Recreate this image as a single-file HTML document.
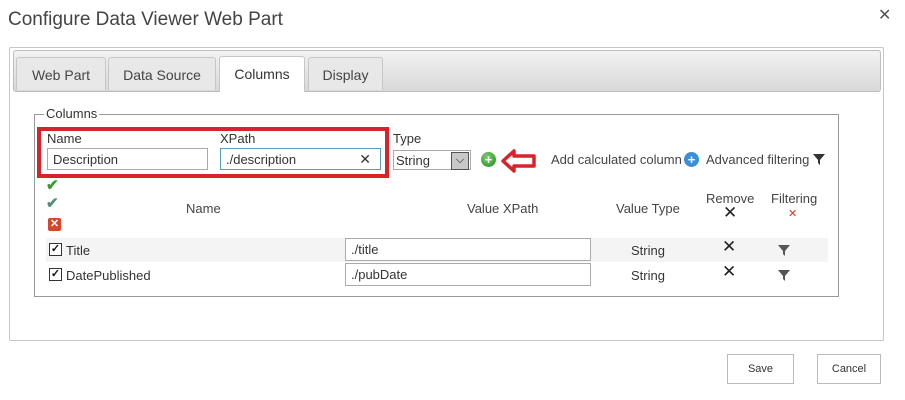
<!DOCTYPE html>
<html><head><style>
body{margin:0;width:905px;height:400px;background:#fff;font-family:"Liberation Sans",sans-serif;color:#444;position:relative;overflow:hidden;font-size:13px}
.a{position:absolute}
.tab{position:absolute;top:57px;height:32px;background:#e8e8e8;border:1px solid #c6c6c6;border-bottom:none;border-radius:3px 3px 0 0;font-size:14px;line-height:34px;text-align:center;color:#444}
.box{position:absolute;border:1px solid #aaa;background:#fff;box-sizing:border-box;font-size:13px;padding:3px 5px;color:#333}
.btn{position:absolute;border:1px solid #bbb;background:#fff;font-size:11px;text-align:center;line-height:28px;color:#333}
</style></head><body>
<div class="a" style="left:8px;top:9px;font-size:19px;color:#444">Configure Data Viewer Web Part</div>
<div class="a" style="left:878px;top:5px;font-size:16px;color:#555">✕</div>
<div class="a" style="left:9px;top:47px;width:873px;height:292px;border:1px solid #c6c6c6;border-radius:2px"></div>
<div class="a" style="left:13px;top:50px;width:866px;height:40px;background:linear-gradient(#f2f2f2,#d8d8d8);border:1px solid #bdbdbd;border-radius:3px"></div>
<div class="tab" style="left:16px;width:88px">Web Part</div>
<div class="tab" style="left:108px;width:106px">Data Source</div>
<div class="tab" style="left:219px;width:84px;background:#fff;height:35px;top:56px;color:#333">Columns</div>
<div class="tab" style="left:308px;width:73px">Display</div>
<div class="a" style="left:34px;top:114px;width:803px;height:181px;border:1px solid #999"></div>
<div class="a" style="left:44px;top:106px;background:#fff;padding:0 2px;color:#333">Columns</div>
<div class="a" style="left:37px;top:127px;width:344px;height:43px;border:4px solid #d9222a"></div>
<div class="a" style="left:47px;top:131px;color:#333">Name</div>
<div class="box" style="left:47px;top:148px;width:161px;height:22px">Description</div>
<div class="a" style="left:220px;top:131px;color:#333">XPath</div>
<div class="box" style="left:220px;top:148px;width:161px;height:22px;border-color:#5a9bc0">./description<span style="position:absolute;right:9px;top:2px;font-size:14px">✕</span></div>
<div class="a" style="left:393px;top:131px;color:#333">Type</div>
<div class="box" style="left:393px;top:150px;width:78px;height:20px;padding:2px 2px">String<span style="position:absolute;right:1px;top:1px;width:16px;height:16px;background:#c8c8c8;border:1px solid #555;font-size:11px;text-align:center;line-height:14px;color:#000">⌵</span></div>
<div class="a" style="left:481px;top:152px;width:15px;height:15px;border-radius:50%;background:radial-gradient(circle at 40% 35%,#7ccf6a,#1d8a22);color:#fff;font-weight:bold;font-size:13px;line-height:15px;text-align:center">+</div>
<svg class="a" style="left:500px;top:148px" width="38" height="26"><path d="M3 13 L14 3 L14 8 L34 8 L34 18 L14 18 L14 23 Z" fill="#fff" stroke="#d9222a" stroke-width="3.5" stroke-linejoin="round"/></svg>
<div class="a" style="left:551px;top:152px;color:#444">Add calculated column</div>
<div class="a" style="left:684px;top:152px;width:15px;height:15px;border-radius:50%;background:#3a8fd6;color:#fff;font-weight:bold;line-height:15px;text-align:center">+</div>
<div class="a" style="left:706px;top:152px;color:#444">Advanced filtering</div>
<svg class="a" style="left:813px;top:154px" width="12" height="11"><path d="M0 0H12L7 6V11L5 9V6Z" fill="#333"/></svg>
<div class="a" style="left:46px;top:176px;color:#3a9a2a;font-size:15px;font-weight:bold">✔</div>
<div class="a" style="left:46px;top:194px;color:#5a8a7a;font-size:15px;font-weight:bold">✔</div>
<div class="a" style="left:48px;top:218px;width:13px;height:13px;background:#d9452a;border-radius:2px;color:#fff;font-size:11px;line-height:13px;text-align:center;font-weight:bold">✕</div>
<div class="a" style="left:186px;top:201px">Name</div>
<div class="a" style="left:467px;top:201px">Value XPath</div>
<div class="a" style="left:616px;top:201px">Value Type</div>
<div class="a" style="left:706px;top:191px">Remove</div>
<div class="a" style="left:723px;top:203px;font-size:17px;color:#222">✕</div>
<div class="a" style="left:771px;top:191px">Filtering</div>
<div class="a" style="left:788px;top:207px;font-size:11px;color:#d33">✕</div>
<div class="a" style="left:46px;top:238px;width:782px;height:24px;background:#f4f4f4"></div>
<div class="a" style="left:49px;top:243px;width:11px;height:11px;border:1px solid #333;background:#fff;font-size:11px;line-height:11px;text-align:center;color:#111;font-weight:bold">✓</div>
<div class="a" style="left:66px;top:243px;color:#333">Title</div>
<div class="box" style="left:345px;top:238px;width:246px;height:23px">./title</div>
<div class="a" style="left:631px;top:243px;color:#333">String</div>
<div class="a" style="left:722px;top:237px;font-size:17px;color:#222">✕</div>
<svg class="a" style="left:778px;top:245px" width="12" height="11"><path d="M0 0H12L7 6V11L5 9V6Z" fill="#555"/></svg>
<div class="a" style="left:49px;top:268px;width:11px;height:11px;border:1px solid #333;background:#fff;font-size:11px;line-height:11px;text-align:center;color:#111;font-weight:bold">✓</div>
<div class="a" style="left:66px;top:268px;color:#333">DatePublished</div>
<div class="box" style="left:345px;top:263px;width:246px;height:23px">./pubDate</div>
<div class="a" style="left:631px;top:268px;color:#333">String</div>
<div class="a" style="left:722px;top:262px;font-size:17px;color:#222">✕</div>
<svg class="a" style="left:778px;top:270px" width="12" height="11"><path d="M0 0H12L7 6V11L5 9V6Z" fill="#555"/></svg>
<div class="btn" style="left:727px;top:354px;width:65px;height:28px">Save</div>
<div class="btn" style="left:817px;top:354px;width:62px;height:28px">Cancel</div>
</body></html>
